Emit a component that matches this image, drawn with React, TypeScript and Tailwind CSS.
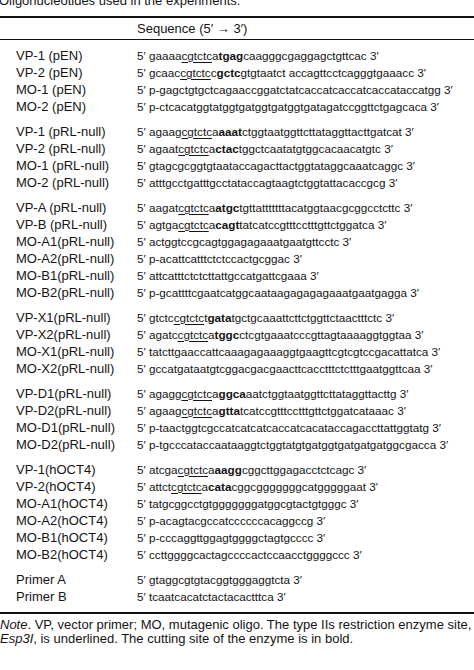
import React from "react";

type Row = [string, string];

const groups: Row[][] = [
  [
    ["VP-1 (pEN)", "gaaaa_cgtctc_a*tgag*caagggcgaggagctgttcac"],
    ["VP-2 (pEN)", "gcaac_cgtctc_c*gctc*gtgtaatct accagttcctcagggtgaaacc"],
    ["MO-1 (pEN)", "p-gagctgtgctcagaaccggatctatcaccatcaccatcaccataccatgg"],
    ["MO-2 (pEN)", "p-ctcacatggtatggtgatggtgatggtgatagatccggttctgagcaca"],
  ],
  [
    ["VP-1 (pRL-null)", "agaag_cgtctc_a*aaat*ctggtaatggttcttataggttacttgatcat"],
    ["VP-2 (pRL-null)", "agaat_cgtctc_a*ctac*tggctcaatatgtggcacaacatgtc"],
    ["MO-1 (pRL-null)", "gtagcgcggtgtaataccagacttactggtataggcaaatcaggc"],
    ["MO-2 (pRL-null)", "atttgcctgatttgcctataccagtaagtctggtattacaccgcg"],
  ],
  [
    ["VP-A (pRL-null)", "aagat_cgtctc_a*atgc*tgttatttttttacatggtaacgcggcctcttc"],
    ["VP-B (pRL-null)", "agtga_cgtctc_a*cagt*tatcatccgtttcctttgttctggatca"],
    ["MO-A1(pRL-null)", "actggtccgcagtggagagaaatgaatgttcctc"],
    ["MO-A2(pRL-null)", "p-acattcatttctctccactgcggac"],
    ["MO-B1(pRL-null)", "attcatttctctcttattgccatgattcgaaa"],
    ["MO-B2(pRL-null)", "p-gcattttcgaatcatggcaataagagagagaaatgaatgagga"],
  ],
  [
    ["VP-X1(pRL-null)", "gtctc_cgtctc_t*gata*tgctgcaaattcttctggttctaactttctc"],
    ["VP-X2(pRL-null)", "agatc_cgtctc_a*tggc*ctcgtgaaatcccgttagtaaaaggtggtaa"],
    ["MO-X1(pRL-null)", "tatcttgaaccattcaaagagaaaggtgaagttcgtcgtccgacattatca"],
    ["MO-X2(pRL-null)", "gccatgataatgtcggacgacgaacttcacctttctctttgaatggttcaa"],
  ],
  [
    ["VP-D1(pRL-null)", "agagg_cgtctc_a*ggca*aatctggtaatggttcttataggttacttg"],
    ["VP-D2(pRL-null)", "agaag_cgtctc_a*gtta*tcatccgtttcctttgttctggatcataaac"],
    ["MO-D1(pRL-null)", "p-taactggtcgccatcatcatcaccatcacataccagaccttattggtatg"],
    ["MO-D2(pRL-null)", "p-tgcccataccaataaggtctggtatgtgatggtgatgatgatggcgacca"],
  ],
  [
    ["VP-1(hOCT4)", "atcga_cgtctc_a*aagg*cggcttggagacctctcagc"],
    ["VP-2(hOCT4)", "attct_cgtctc_a*cata*cggcgggggggcatgggggaat"],
    ["MO-A1(hOCT4)", "tatgcggcctgtgggggggatggcgtactgtgggc"],
    ["MO-A2(hOCT4)", "p-acagtacgccatccccccacaggccg"],
    ["MO-B1(hOCT4)", "p-cccaggttggagtggggctagtgcccc"],
    ["MO-B2(hOCT4)", "ccttggggcactagccccactccaacctggggccc"],
  ],
  [
    ["Primer A", "gtaggcgtgtacggtgggaggtcta"],
    ["Primer B", "tcaatcacatctactacactttca"],
  ],
];

function Seq({ s }: { s: string }) {
  const parts: React.ReactNode[] = [];
  let buf = "";
  let u = false;
  let b = false;
  let k = 0;
  const flush = () => {
    if (!buf) return;
    if (u) parts.push(<span key={k++} className="underline underline-offset-[2px] decoration-[1px]">{buf}</span>);
    else if (b) parts.push(<span key={k++} className="font-bold">{buf}</span>);
    else parts.push(<span key={k++}>{buf}</span>);
    buf = "";
  };
  for (const ch of s) {
    if (ch === "_") {
      flush();
      u = !u;
    } else if (ch === "*") {
      flush();
      b = !b;
    } else buf += ch;
  }
  flush();
  return (
    <span className="whitespace-pre">
      {"5\u2032 "}
      {parts}
      {" 3\u2032"}
    </span>
  );
}

export default function App() {
  return (
    <div className="w-[474px] h-[670px] overflow-hidden bg-white text-[#141414] font-['Liberation_Sans','Arial',sans-serif]">
      <p className="-mt-[7px] -ml-[1px] text-[13px] leading-[15px] whitespace-nowrap">
        Oligonucleotides used in the experiments.
      </p>
      <div className="mt-[8px] border-t-2 border-[#111]">
        <div className="flex h-[22px] items-center border-b border-[#111] text-[13px]">
          <div className="w-[137px] shrink-0" />
          <div>Sequence (5{"\u2032"} {"\u2192"} 3{"\u2032"})</div>
        </div>
        <div className="flex flex-col gap-[8px] pt-[7px] pb-[7px]">
          {groups.map((g, gi) => (
            <div key={gi} className="flex flex-col">
              {g.map(([label, seq], ri) => (
                <div key={ri} className="flex h-[17px] items-center whitespace-nowrap">
                  <div className="w-[137px] shrink-0 pl-[16px] text-[13px]">{label}</div>
                  <div className="text-[11.7px]">
                    <Seq s={seq} />
                  </div>
                </div>
              ))}
            </div>
          ))}
        </div>
        <div className="border-t-2 border-[#111] pt-[4px] text-[13px] leading-[14px] whitespace-nowrap">
          <div>
            <i>Note</i>. VP, vector primer; MO, mutagenic oligo. The type IIs restriction enzyme site,
          </div>
          <div>
            <i>Esp3I</i>, is underlined. The cutting site of the enzyme is in bold.
          </div>
        </div>
      </div>
    </div>
  );
}
